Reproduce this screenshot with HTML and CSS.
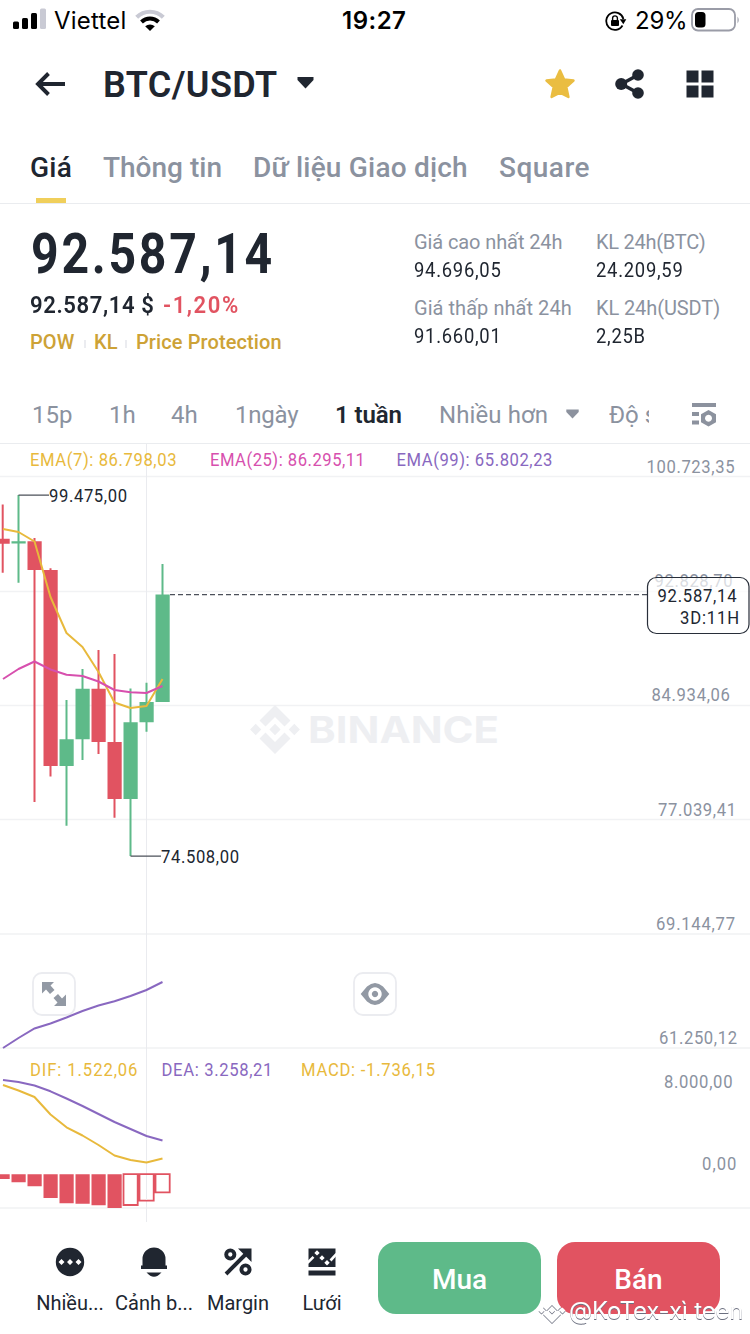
FILE: index.html
```html
<!DOCTYPE html>
<html lang="vi">
<head>
<meta charset="utf-8">
<title>BTC/USDT</title>
<link rel="stylesheet" href="styles.css">
</head>
<body>
<div class="screen">
  <div class="status">
    <svg class="signal" width="34" height="22" viewBox="0 0 34 22"><rect x="0" y="13.500" width="6" height="7.500" rx="1.500"/><rect x="9" y="10" width="6" height="11" rx="1.500"/><rect x="18" y="5" width="6" height="16" rx="1.500"/><rect x="27" y="0.500" width="6" height="20.500" rx="1.500" fill="#c9cad4"/></svg>
    <span class="carrier">Viettel</span>
    <svg class="wifi" width="30" height="22" viewBox="0 0 30 22" fill="none"><path d="M1.700 8.200a19 19 0 0 1 26.600 0" stroke="#c9cad4" stroke-width="4.200"/><path d="M6.500 13a12.300 12.300 0 0 1 17 0" stroke="#000" stroke-width="4"/><path d="M10.200 17.300a7 7 0 0 1 9.600 0L15 22z" fill="#000"/></svg>
    <span class="clock">19:27</span>
    <svg class="lock" width="22" height="20" viewBox="0 0 22 20"><path d="M17.500 14.500A8.700 8.700 0 1 1 18.400 8" fill="none" stroke="#000" stroke-width="1.800"/><path d="M14.800 8.200h6.500l-3 5z"/><rect x="6" y="9" width="8" height="6" rx="1"/><path d="M7.600 9V7.300a2.400 2.400 0 0 1 4.800 0V9" fill="none" stroke="#000" stroke-width="1.400"/></svg>
    <span class="percent">29%</span>
    <svg class="battery" width="49" height="24" viewBox="0 0 49 24"><rect x="1" y="1" width="43" height="21.500" rx="6" fill="none" stroke="#9a9ca7" stroke-width="1.800"/><rect x="4" y="4" width="10.500" height="15.500" rx="3.500"/><path d="M46.500 8.500q2.500 3.500 0 7z" fill="#9a9ca7"/></svg>
  </div>

  <header class="header">
    <svg class="back" width="31" height="24" viewBox="0 0 31 24" fill="none" stroke="#202630" stroke-width="3.900"><path d="M30 12H3M13.500 1.500 3 12l10.500 10.500"/></svg>
    <h1 class="pair">BTC/USDT</h1>
    <svg class="caret" width="17" height="13" viewBox="0 0 17 13"><path d="M.5 1h16v3L8.500 12.500.5 4z" fill="#202630"/></svg>
    <svg class="star" width="32" height="32" viewBox="0 0 32 32"><path d="M16 2.500l4.100 9.100 9.400.9-7.200 6.600 2.100 9.900-8.400-4.300-8.400 4.300 2.100-9.900-7.200-6.600 9.400-.9z" fill="#eabd41" stroke="#eabd41" stroke-width="2.500" stroke-linejoin="round"/></svg>
    <svg class="share" width="30" height="30" viewBox="0 0 30 30" fill="#202630"><path d="M23 6 6.500 15 23 24" fill="none" stroke="#202630" stroke-width="3.500"/><circle cx="23" cy="6" r="5.800"/><circle cx="6.200" cy="15" r="6"/><circle cx="23" cy="24" r="5.800"/></svg>
    <svg class="grid-icon" width="28" height="28" viewBox="0 0 28 28" fill="#202630"><path d="M.5.500h12v12H.5zM15.500.500h12v12h-12zM.5 15.500h12v12H.5zM15.500 15.500h12v12h-12z"/></svg>
  </header>

  <nav class="tabs">
    <span class="tab tab-price active">Giá</span>
    <span class="tab tab-info">Thông tin</span>
    <span class="tab tab-data">Dữ liệu Giao dịch</span>
    <span class="tab tab-square">Square</span>
  </nav>

  <section class="summary">
    <div class="quote">
      <div class="last">92.587,14</div>
      <div class="fiat"><span class="fiat-value">92.587,14 $</span><span class="change">-1,20%</span></div>
      <div class="tags"><span class="tag-pow">POW</span><i></i><span class="tag-kl">KL</span><i></i><span class="tag-pp">Price Protection</span></div>
    </div>
    <dl class="stats">
      <div><dt class="dt-high">Giá cao nhất 24h</dt><dd>94.696,05</dd></div>
      <div><dt class="dt-btc">KL 24h(BTC)</dt><dd>24.209,59</dd></div>
      <div><dt class="dt-low">Giá thấp nhất 24h</dt><dd>91.660,01</dd></div>
      <div><dt class="dt-usdt">KL 24h(USDT)</dt><dd>2,25B</dd></div>
    </dl>
  </section>

  <nav class="intervals">
    <span class="iv iv-15">15p</span>
    <span class="iv iv-1h">1h</span>
    <span class="iv iv-4h">4h</span>
    <span class="iv iv-1d">1ngày</span>
    <span class="iv iv-1w active">1 tuần</span>
    <span class="iv iv-more">Nhiều hơn</span>
    <svg class="more-caret" width="13" height="10" viewBox="0 0 13 10"><path d="M.3.500h12.400V3L6.500 9.500.3 3z" fill="#8c929e"/></svg>
    <span class="iv iv-depth">Độ sâu</span>
    <svg class="settings" width="26" height="25" viewBox="0 0 26 25" fill="#8c929e"><path d="M1 1h24v4H1zM1 10h7v4H1zM1 18.500h7v4H1z"/><path fill-rule="evenodd" d="M17.500 8l7.500 4.200v8.100l-7.500 4.200-7.500-4.200v-8.100zm0 4.700a3.500 3.500 0 1 0 .01 0z"/></svg>
  </nav>

  <svg class="chart" width="750" height="778" viewBox="0 444 750 778">
    <g stroke="#f1f2f4" stroke-width="1.500"><path d="M0 476.500H750M0 591.500H750M0 705.500H750M0 819.500H750M0 934H750M0 1048H750M0 1208H750"/><path d="M146.500 444V1222" stroke="#eaebef" stroke-width="1"/></g>
    <g fill="#eeeff2">
      <path d="M275 705l15.500 15.500-6 6-9.500-9.500-9.500 9.500-6-6zM275 754l15.500-15.500-6-6-9.500 9.500-9.500-9.500-6 6zM275 723.800l5.600 5.700-5.600 5.700-5.600-5.700zM255.700 723.800l5.600 5.700-5.600 5.700-5.600-5.700zM294.300 723.800l5.600 5.700-5.600 5.700-5.600-5.700z"/>
      <text class="brand" x="308" y="743" textLength="191" lengthAdjust="spacingAndGlyphs">BINANCE</text>
    </g>
    <g class="axis num">
      <text x="646.500" y="473" textLength="97.800">100.723,35</text>
      <text x="654.500" y="587" textLength="86.700">92.828,70</text>
      <text x="651.500" y="701" textLength="87.200">84.934,06</text>
      <text x="658" y="816" textLength="86.700">77.039,41</text>
      <text x="656" y="930" textLength="87.800">69.144,77</text>
      <text x="659" y="1044" textLength="86.700">61.250,12</text>
      <text x="664" y="1088" textLength="76.100">8.000,00</text>
      <text x="702" y="1170" textLength="38.300">0,00</text>
    </g>
    <g stroke="#e15361" stroke-width="2"><path d="M2.700 504.500V572.700M34.500 538V802M50.500 568.300V776.500M98.500 650V754M114.500 654V817.700"/></g>
    <g stroke="#5eba89" stroke-width="2"><path d="M18.500 495V582.700M66.500 700V825.700M82.500 669V760M130.500 688.500V856M146.500 682.700V731.700M162.500 564V702"/></g>
    <path fill="#e15361" d="M0 538.700H9.700V543.700H0zM27.500 541.300H41.700V570H27.500zM43.500 570H57.700V766H43.500zM91.500 688.700H105.700V742H91.500zM107.500 742H121.700V799H107.500z"/>
    <path fill="#5eba89" d="M11.500 541.300H25.700V543.500H11.500zM59.500 739.300H73.700V766H59.500zM75.500 688.700H89.700V739.300H75.500zM123.500 722.300H137.700V799H123.500zM139.500 702H153.700V722.300H139.500zM155.500 594.500H169.700V702H155.500z"/>
    <g fill="none" stroke-width="2" stroke-linejoin="round">
      <path stroke="#e8b93c" d="M3 529L18.500 532 34.500 541.500 50.500 597 66.500 633 82.500 647 98.500 672 114.500 702.500 130.500 708 146.500 706 162.500 679"/>
      <path stroke="#d750ae" d="M3 679L18.500 669 34.500 661.500 50.500 669.500 66.500 674.700 82.500 676 98.500 681.500 114.500 690 130.500 692.300 146.500 693 162.500 686"/>
      <path stroke="#8968c0" d="M3 1080L18.500 1082 34.500 1085.500 50.500 1091.300 66.500 1098.500 82.500 1106 98.500 1114 114.500 1122 130.500 1129 146.500 1136 162.500 1140.500"/>
      <path stroke="#e8b93c" d="M3 1085L18.500 1090.500 34.500 1097 50.500 1114.500 66.500 1127.300 82.500 1135.500 98.500 1145 114.500 1155.500 130.500 1160 146.500 1162.500 162.500 1158.500"/>
    </g>
    <path fill="#e15361" d="M0 1174.300H9.700V1179H0zM11.500 1174.300H25.700V1182.300H11.500zM27.500 1174.300H41.700V1186.300H27.500zM43.500 1174.300H57.700V1198H43.500zM59.500 1174.300H73.700V1203.300H59.500zM75.500 1174.300H89.700V1203.700H75.500zM91.500 1174.300H105.700V1205.300H91.500zM107.500 1174.300H121.700V1208H107.500z"/>
    <path fill="#fff" stroke="#e15361" stroke-width="1.800" d="M123.500 1174.200H137.700V1205H123.500zM139.500 1174.200H153.700V1200.700H139.500zM155.500 1174.200H169.700V1192.300H155.500z"/>
    <path stroke="#eaebef" d="M146.500 1175V1200"/>
    <g stroke="#4c515a" stroke-width="1.200" fill="none"><path d="M18.500 495.200H49M130.500 856.200H161"/><path stroke-dasharray="5 3" d="M170 594.700H647"/></g>
    <g class="ink num"><text x="49" y="502" textLength="86.700">99.475,00</text><text x="161" y="863" textLength="86.700">74.508,00</text></g>
    <rect x="647.500" y="577.500" width="101.500" height="56" rx="9" fill="#fff" fill-opacity=".68" stroke="#282e39" stroke-width="1.200"/>
    <g class="ink num"><text x="657.500" y="602" textLength="87.800">92.587,14</text><text x="680" y="624" textLength="65.600">3D:11H</text></g>
    <g class="num">
      <text x="30" y="466" textLength="162.800" fill="#e8b93c">EMA(7): 86.798,03</text>
      <text x="210" y="466" textLength="172.200" fill="#d750ae">EMA(25): 86.295,11</text>
      <text x="396.500" y="466" textLength="173.300" fill="#8968c0">EMA(99): 65.802,23</text>
      <text x="30" y="1076" textLength="119.400" fill="#e8b93c">DIF: 1.522,06</text>
      <text x="161.500" y="1076" textLength="123.300" fill="#8968c0">DEA: 3.258,21</text>
      <text x="301" y="1076" textLength="148.900" fill="#e8b93c">MACD: -1.736,15</text>
    </g>
    <g fill="#fff" stroke="#ebecf0" stroke-width="1.800"><rect x="33" y="973" width="42" height="42" rx="9"/><rect x="354" y="973" width="42" height="42" rx="9"/></g>
    <path fill="#9299a4" d="M42 982H54L50.500 985.500 54.500 990 50 994 46 989.500 42 993.500zM66 1006H54L57.500 1002.500 53.500 998 58 994 62 998.500 66 994.500z"/>
    <path fill="#9299a4" fill-rule="evenodd" d="M360.700 994L367 986.500Q375 979.500 383 986.500L389.300 994 383 1001.500Q375 1008.500 367 1001.500zM375 987.300a6.700 6.700 0 1 0 .01 0zM375 990.800a3.200 3.200 0 1 1-.01 0z"/>
    <path fill="none" stroke="#8968c0" stroke-width="2" d="M3 1048L18.500 1038 34.500 1028.500 50.500 1023.500 66.500 1017.500 82.500 1011 98.500 1005.500 114.500 1001.300 130.500 996 146.500 990 162.500 982"/>
  </svg>

  <footer class="actions">
    <div class="act"><svg width="30" height="30" viewBox="0 0 30 30"><circle cx="15" cy="15" r="14.200" fill="#202630"/><path fill="#fff" d="M6.500 12l3 3-3 3-3-3zM15 12l3 3-3 3-3-3zM23.500 12l3 3-3 3-3-3z"/></svg><span class="lb-more">Nhiều...</span></div>
    <div class="act"><svg width="30" height="30" viewBox="0 0 30 30" fill="#202630"><path d="M3.500 12A11.500 11.500 0 0 1 26.500 12V18.500H28V22H2V18.500H3.500zM7.500 25.500H22.500Q15 34 7.500 25.500z"/></svg><span class="lb-alert">Cảnh b...</span></div>
    <div class="act"><svg width="30" height="30" viewBox="0 0 30 30" fill="none" stroke="#202630" stroke-width="3.900"><circle cx="7.300" cy="7.500" r="4.100"/><circle cx="22.500" cy="22.500" r="4.100"/><path d="M3 27L24 6"/><path d="M15 1.500h13.500V15L24 10.500 19.500 6z" fill="#202630" stroke="none"/></svg><span class="lb-margin">Margin</span></div>
    <div class="act"><svg width="30" height="30" viewBox="0 0 30 30"><path d="M1.500 1.500h27v18.500h-27zM1.500 23.500h27v5h-27z" fill="#202630"/><path d="M.5 15.800L6.500 9.800M23.500 13.500L29.500 7" fill="none" stroke="#fff" stroke-width="2.600"/><path d="M10 3.200l2.700 2.700L10 8.600 7.300 5.900zM15 8.200l2.700 2.700-2.700 2.700-2.700-2.700zM20 13l2.700 2.700-2.700 2.700-2.700-2.700z" fill="#fff"/></svg><span class="lb-grid">Lưới</span></div>
    <button class="buy">Mua</button>
    <button class="sell">Bán</button>
  </footer>
  <div class="credit"><svg width="28" height="28" viewBox="0 0 28 28"><path d="M14 1l9 9-3.500 3.500L14 8l-5.500 5.500L5 10zM14 26l9-9-3.500-3.500L14 19l-5.500-5.500L5 17zM14 10.500l3 3-3 3-3-3zM3.500 10.500l3 3-3 3-3-3zM24.500 10.500l3 3-3 3-3-3z" fill="#fff"/></svg><span>@KoTex-xì teen</span></div>
</div>
</body>
</html>
```
FILE: styles.css
```css
* { box-sizing: border-box; }
body { margin: 0; background: #fff; color: #202630; font-family: Roboto, "Noto Sans", sans-serif; }
span, dt, dd, h1 { white-space: nowrap; }
svg { display: block; flex: none; }
.screen { position: relative; width: 750px; height: 1334px; overflow: hidden; display: flex; flex-direction: column; }

.status { height: 40px; display: flex; align-items: center; padding: 1px 0 0 13px; color: #000; font: 400 24px/40px Inter, sans-serif; flex: none; }
.signal { margin-top: -3px; }
.carrier { width: 72px; margin-left: 7px; letter-spacing: .2px; }
.wifi { margin-left: 9px; margin-top: -2px; }
.clock { width: 65px; margin-left: 177px; font-weight: 600; letter-spacing: .5px; }
.lock { margin-left: 198px; }
.percent { width: 51px; margin-left: 8px; letter-spacing: -.2px; }
.battery { margin-left: 5px; margin-top: -2px; }

.header { height: 88px; display: flex; align-items: center; padding-left: 35px; flex: none; }
.pair { margin: 2px 0 0 37px; width: 174px; font-size: 36px; line-height: 44px; font-weight: 600; letter-spacing: .4px; }
.caret { margin-left: 20px; margin-top: -3px; }
.star { margin-left: 230px; }
.share { margin-left: 39px; }
.grid-icon { margin-left: 41px; }

.tabs { height: 76px; flex: none; display: flex; padding-left: 30px; border-bottom: 1px solid #eaecef; }
.tab { position: relative; height: 75px; font-size: 28px; line-height: 79px; font-weight: 500; color: #8b929f; }
.tab-price { width: 73px; letter-spacing: .3px; }
.tab-info { width: 150px; }
.tab-data { width: 246px; letter-spacing: .2px; }
.tab-square { letter-spacing: .500px; }
.tab.active { color: #202630; }
.tab.active::after { content: ""; position: absolute; left: 6px; bottom: 0; width: 30px; height: 5px; background: #f0cf5b; }

.summary { height: 181px; flex: none; display: flex; padding-left: 30px; }
.quote { width: 384px; padding-top: 19px; }
.last { width: 300px; margin-left: 1px; font-size: 56px; line-height: 62px; font-weight: 700; transform: scaleX(.86); transform-origin: left; letter-spacing: 3.200px; }
.fiat { display: flex; height: 34px; line-height: 34px; margin-top: 3px; font-size: 24px; font-weight: 600; }
.fiat span { transform: scaleX(.92); transform-origin: left; letter-spacing: .65px; }
.fiat-value { width: 133px; }
.fiat .change { color: #e15361; letter-spacing: 1.700px; }
.tags { display: flex; align-items: center; height: 36px; margin-top: 2px; font-size: 20px; font-weight: 500; color: #cda236; letter-spacing: .1px; }
.tag-pow { width: 45px; }
.tag-kl { width: 22px; margin-left: -1px; }
.tags i { width: 2px; height: 8px; margin: 3px 9px 0; background: #ebecf0; }
.stats { margin: 0; padding-top: 24px; display: grid; grid-template-columns: 182px 140px; grid-template-rows: 66px 66px; }
.stats dt { font-size: 20px; line-height: 28px; color: #8b929f; letter-spacing: -.1px; }
.stats .dt-low { letter-spacing: .05px; }
.stats .dt-btc { letter-spacing: -.25px; }
.stats dd { margin: 0; font-size: 20px; line-height: 28px; transform: scaleX(.92); transform-origin: left; letter-spacing: .8px; }

.intervals { height: 59px; flex: none; display: flex; align-items: center; padding: 2px 0 0 32px; border-bottom: 1px solid #eaecef; font-size: 24px; line-height: 56px; color: #8b929f; }
.iv-15 { width: 77px; }
.iv-1h { width: 62px; }
.iv-4h { width: 64px; }
.iv-1d { width: 100px; letter-spacing: -.2px; }
.iv-1w { width: 104px; letter-spacing: -.1px; }
.iv.active { color: #202630; font-weight: 600; }
.iv-more { width: 127px; letter-spacing: .1px; }
.iv-depth { width: 40px; margin-left: 30px; overflow: hidden; }
.more-caret { margin-top: -3px; }
.settings { margin-left: 42px; margin-top: -1px; }

.chart { flex: none; font-family: Roboto, sans-serif; font-size: 18.5px; }
.num text { transform: scaleX(.9); transform-box: fill-box; transform-origin: left; }
.brand { font: 700 37px Inter, sans-serif; }
.axis { fill: #8b929f; }
.ink { fill: #202630; }

.actions { height: 112px; flex: none; display: flex; padding: 20px 0 0 28px; }
.act { width: 84px; height: 90px; padding-top: 5px; display: flex; flex-direction: column; align-items: center; font-size: 20px; line-height: 28px; }
.act svg { margin-bottom: 12px; }
.actions button { width: 163px; height: 72px; padding: 2px 0 0; border: 0; border-radius: 18px; color: #fff; font: 500 28px Roboto, sans-serif; }
.buy { margin-left: 14px; background: #5eba89; }
.sell { margin-left: 16px; background: #e15361; }
.credit { position: absolute; left: 538px; top: 1296px; display: flex; align-items: center; gap: 3px; color: #fff; font: 24px/30px Inter, sans-serif; letter-spacing: -.15px; }
.credit span, .credit svg { filter: drop-shadow(0 1px .5px #6c7080); }
```
